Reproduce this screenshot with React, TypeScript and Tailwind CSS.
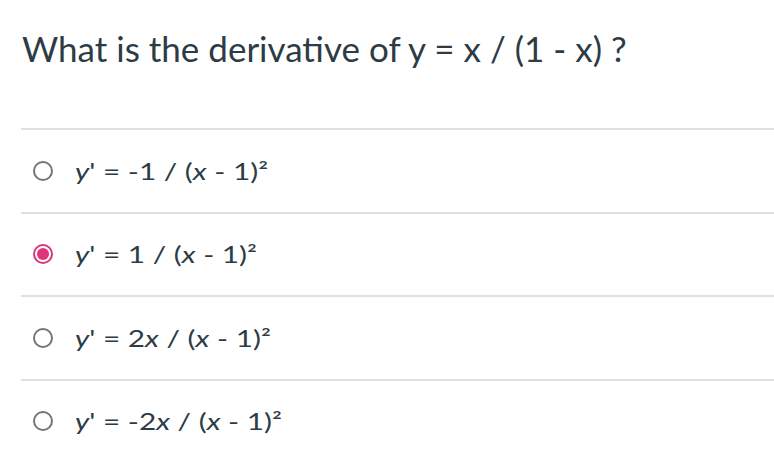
import React from "react";

type Opt = { pre: string; selected: boolean };

const options: Opt[] = [
  { pre: "-1", selected: false },
  { pre: "1", selected: true },
  { pre: "2x", selected: false },
  { pre: "-2x", selected: false },
];

const Radio = ({ selected }: { selected: boolean }) =>
  selected ? (
    <span className="flex h-5 w-5 shrink-0 items-center justify-center rounded-full border-2 border-[#e0337e]">
      <span className="h-3 w-3 rounded-full bg-[#e0337e]" />
    </span>
  ) : (
    <span className="h-5 w-5 shrink-0 rounded-full border-2 border-[#757575]" />
  );

// equation text in the reference is a stretched image, so widen it
const Equation = ({ pre }: { pre: string }) => (
  <span className="inline-block origin-left scale-x-[1.24] text-[24px] leading-[28px] whitespace-nowrap">
    <i className="italic">y</i>' = {pre.endsWith("x") ? <>{pre.slice(0, -1)}<i className="italic">x</i></> : pre} / (<i className="italic">x</i> - 1)²
  </span>
);

export default function App() {
  return (
    <div className="w-[774px] h-[470px] bg-white text-[#2d3b45] font-['Lato',sans-serif]">
      <div className="h-[128px] pl-[22px] pt-[27px]">
        <h1 className="text-[35px] leading-[42px] font-normal">What is the derivative of y = x / (1 - x) ?</h1>
      </div>
      <div className="ml-[21px]">
        {options.map((o, i) => (
          <label
            key={i}
            className="flex h-[83.5px] items-center gap-[22px] pl-[12px] border-t-2 border-[#e0e0e0]"
          >
            <Radio selected={o.selected} />
            <Equation pre={o.pre} />
          </label>
        ))}
      </div>
    </div>
  );
}
